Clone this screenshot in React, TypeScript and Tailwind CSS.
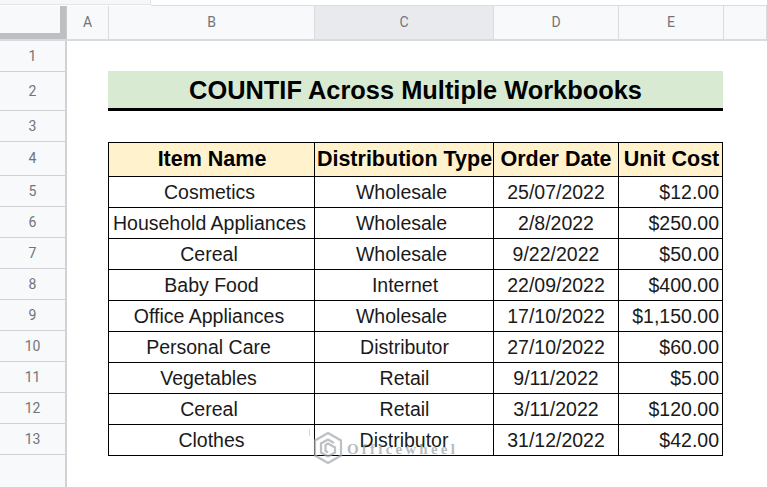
const colHead = [
  { l: "A", w: "w-[42px]", sel: false },
  { l: "B", w: "w-[206px]", sel: false },
  { l: "C", w: "w-[179px]", sel: true },
  { l: "D", w: "w-[125px]", sel: false },
  { l: "E", w: "w-[105px]", sel: false },
  { l: "", w: "flex-1", sel: false },
];
const rowHead = [
  { n: 1, h: "h-[31px]" },
  { n: 2, h: "h-[39px]" },
  { n: 3, h: "h-[31px]" },
  { n: 4, h: "h-[34px]" },
  ...[5, 6, 7, 8, 9, 10, 11, 12, 13].map((n) => ({ n, h: "h-[31px]" })),
];
const rows = [
  { c: ["Cosmetics", "Wholesale", "25/07/2022", "$12.00"], b: "pr-[4px]", s: "pr-[5px]" },
  { c: ["Household Appliances", "Wholesale", "2/8/2022", "$250.00"], b: "pr-[4px]", s: "pr-[5px]" },
  { c: ["Cereal", "Wholesale", "9/22/2022", "$50.00"], b: "pr-[5px]", s: "pr-[5px]" },
  { c: ["Baby Food", "Internet", "22/09/2022", "$400.00"], b: "", s: "pl-[2px]" },
  { c: ["Office Appliances", "Wholesale", "17/10/2022", "$1,150.00"], b: "pr-[5px]", s: "pr-[5px]" },
  { c: ["Personal Care", "Distributor", "27/10/2022", "$60.00"], b: "pr-[6px]", s: "pl-[1px]" },
  { c: ["Vegetables", "Retail", "9/11/2022", "$5.00"], b: "pr-[6px]", s: "pl-[1px]" },
  { c: ["Cereal", "Retail", "3/11/2022", "$120.00"], b: "pr-[5px]", s: "pl-[1px]" },
  { c: ["Clothes", "Distributor", "31/12/2022", "$42.00"], b: "", s: "" },
];
const heads = ["Item Name", "Distribution Type", "Order Date", "Unit Cost"];
const headPad = ["pl-[1px]", "pl-[1px]", "", "pl-[2px]"];
const widths = ["w-[206px]", "w-[179px]", "w-[125px]", "w-[103px]"];

export default function App() {
  return (
    <div className="relative w-[767px] h-[487px] overflow-hidden bg-white font-['Roboto','Liberation_Sans',sans-serif]">
      <div className="flex h-[6px]">
        <div className="w-[151px] h-[5px] bg-[#f6f7f8] border-b border-r border-[#e4e5e7]" />
        <div className="flex-1 border-b border-[#dadce0]" />
      </div>
      <div className="flex h-[35px] border-b-2 border-[#d9dbde] bg-[#f8f9fa]">
        <div className="relative w-[67px] shrink-0 bg-[#f8f9fa] border-r border-[#c7c9cc]">
          <div className="absolute right-0 top-0 bottom-0 w-[6px] bg-[#bdc0c3]" />
          <div className="absolute left-0 right-0 bottom-0 h-[6px] bg-[#bdc0c3]" />
        </div>
        {colHead.map((c, i) => (
          <div
            key={i}
            className={`${c.w} flex items-center justify-center text-[14px] text-[#70757a] border-r border-[#d9dbde] ${c.sel ? "bg-[#e8eaed]" : ""}`}
          >
            {c.l}
          </div>
        ))}
      </div>
      <div className="flex">
        <div className="w-[67px] h-[446px] shrink-0 bg-[#f8f9fa] border-r-2 border-[#d0d2d5]">
          {rowHead.map((r) => (
            <div
              key={r.n}
              className={`${r.h} flex items-center justify-center text-[14px] text-[#70757a] border-b border-[#d0d2d5]`}
            >
              {r.n}
            </div>
          ))}
        </div>
        <div className="pl-[41px] pt-[30px] w-[700px] font-['Liberation_Sans',Arial,sans-serif]">
          <div className="w-[615px] h-[40px] pt-[2px] bg-[#d9ead3] border-b-[3px] border-black flex items-center justify-center text-[25.4px] font-bold text-black">
            COUNTIF Across Multiple Workbooks
          </div>
          <div className="mt-[31px] w-[615px] border border-black border-b-0">
            <div className="flex h-[34px] bg-[#fff2cc] border-b border-black">
              {heads.map((h, i) => (
                <div
                  key={h}
                  className={`${widths[i]} ${headPad[i]} flex items-center justify-center text-[21.5px] font-bold text-black whitespace-nowrap pb-[1px] ${i < 3 ? "border-r border-black" : ""}`}
                >
                  {h}
                </div>
              ))}
            </div>
            {rows.map((r, ri) => (
              <div key={ri} className="flex h-[31px] border-b border-black">
                {r.c.map((v, i) => (
                  <div
                    key={i}
                    className={`${widths[i]} flex items-center pt-[1px] text-[19.5px] text-[#1a1a1a] whitespace-nowrap ${i === 3 ? "justify-end pr-[3px]" : "justify-center"} ${i === 0 ? r.b : ""} ${i === 1 ? r.s : ""} ${i < 3 ? "border-r border-black" : ""}`}
                  >
                    {v}
                  </div>
                ))}
              </div>
            ))}
          </div>
        </div>
      </div>
      <div className="absolute left-[308px] top-[428px] flex items-start gap-[4px] opacity-70">
        <svg width="35" height="37" viewBox="0 0 35 37" fill="none" stroke="#a2a6ac" strokeWidth="2.2">
          <path d="M1.500 1 V8" strokeWidth="1" stroke="#c4c7cb" />
          <path d="M20 5 L33 12.500 V27.500 L20 35 L7 27.500 V12.500 Z" />
          <path d="M26 15 L20 11.500 L13 15.500 V24.500 L20 28.500 L27 24.500 V19.500 L20 15.500 L17.500 17 V23 L20 24.500" />
        </svg>
        <span className="font-['Liberation_Serif',serif] font-bold text-[15px] tracking-[3.2px] leading-none text-[#9a9fa6] mt-[14px]">
          Officewheel
        </span>
      </div>
    </div>
  );
}
